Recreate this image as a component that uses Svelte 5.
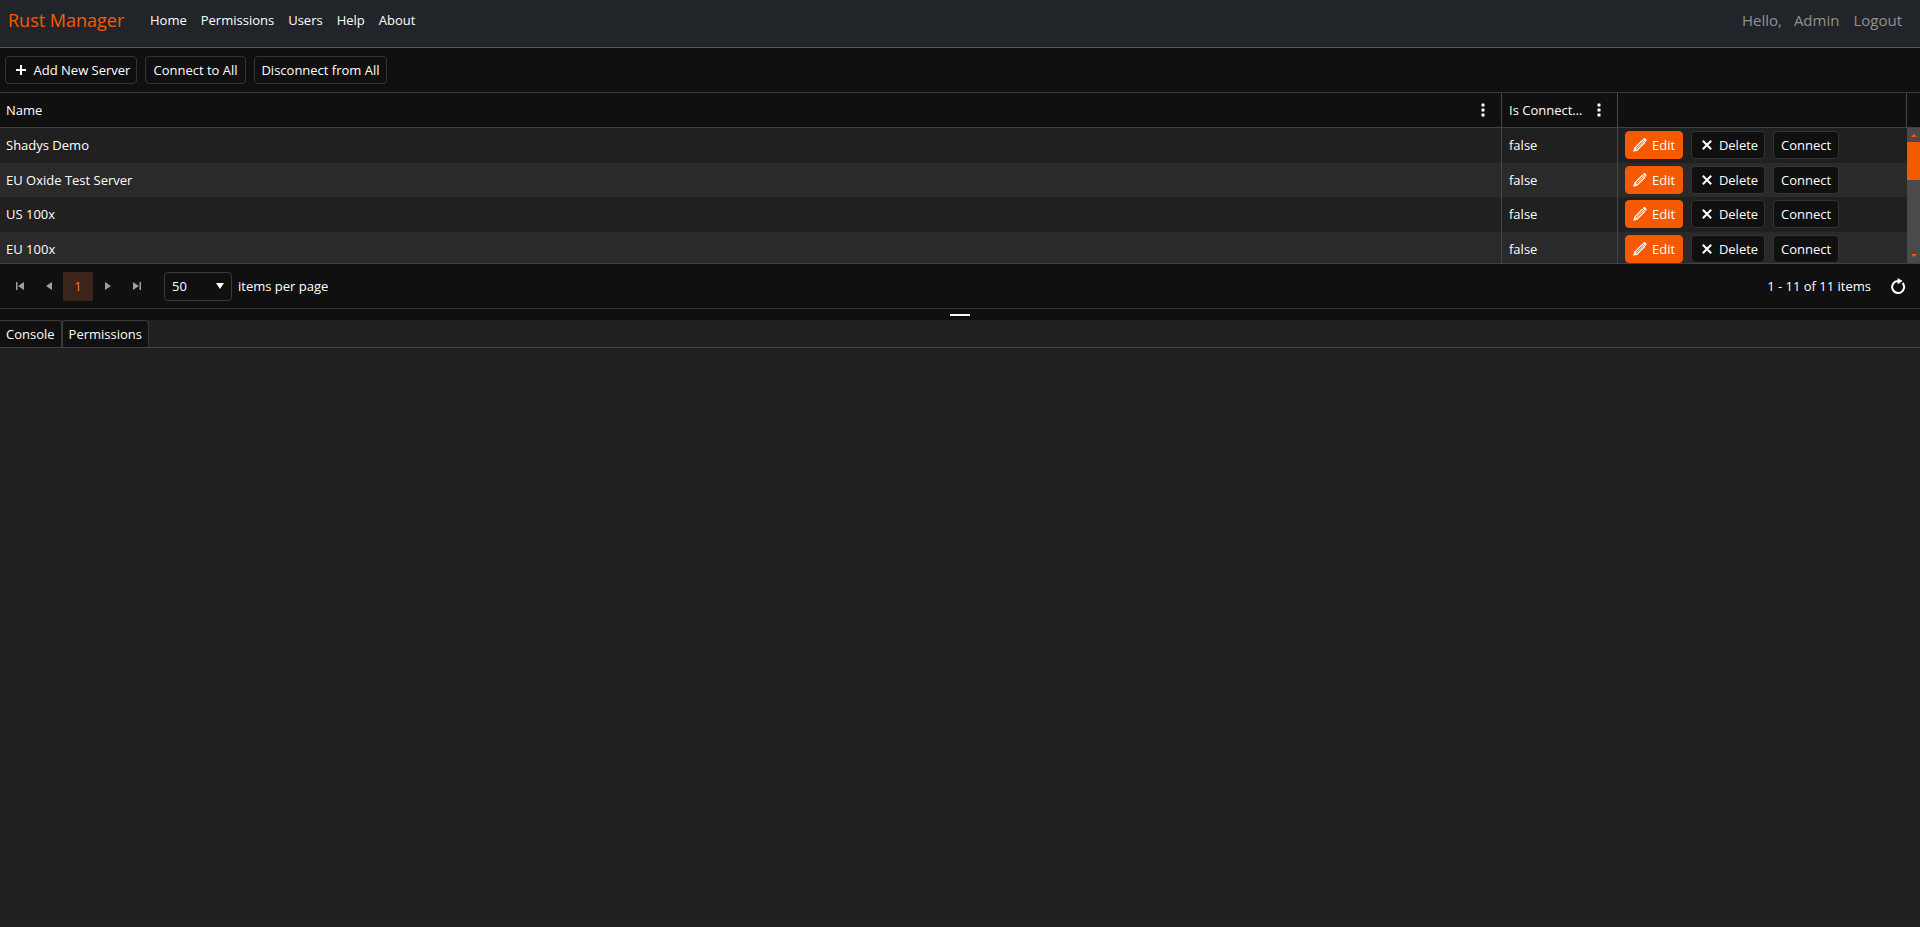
<script>
  const links = ['Home', 'Permissions', 'Users', 'Help', 'About'];
  const servers = ['Shadys Demo', 'EU Oxide Test Server', 'US 100x', 'EU 100x'];
  let pageSize = $state('50');
</script>

{#snippet dots()}
  <button class="menu" aria-label="Column menu">
    <svg width="4" height="14" viewBox="0 0 4 14" fill="currentColor">
      <rect x="0.5" y="0.5" width="3" height="3" rx="0.6" />
      <rect x="0.5" y="5.5" width="3" height="3" rx="0.6" />
      <rect x="0.5" y="10.5" width="3" height="3" rx="0.6" />
    </svg>
  </button>
{/snippet}

<div class="page">
  <header>
    <a class="brand" href="#home">Rust Manager</a>
    <nav>
      {#each links as link}
        <a href="#{link.toLowerCase()}">{link}</a>
      {/each}
    </nav>
    <div class="account">
      <span>Hello,</span>
      <a href="#admin">Admin</a>
      <a class="logout" href="#logout">Logout</a>
    </div>
  </header>

  <div class="toolbar">
    <button class="btn add">
      <svg width="10" height="10" viewBox="0 0 10 10" fill="currentColor"><path d="M4 0h2v4h4v2H6v4H4V6H0V4h4z" /></svg>
      Add New Server
    </button>
    <button class="btn all">Connect to All</button>
    <button class="btn none">Disconnect from All</button>
  </div>

  <section class="grid">
    <table>
      <colgroup><col /><col class="c-state" /><col class="c-actions" /></colgroup>
      <thead>
        <tr>
          <th><div class="head"><span>Name</span>{@render dots()}</div></th>
          <th><div class="head"><span>Is Connected</span>{@render dots()}</div></th>
          <th></th>
        </tr>
      </thead>
      <tbody>
        {#each servers as name}
          <tr>
            <td>{name}</td>
            <td>false</td>
            <td>
              <div class="actions">
                <button class="btn primary">
                  <svg width="14" height="14" viewBox="0 0 14 14">
                    <path fill="currentColor" d="M0.2 13.8l1-4.1L9.3 1.6l3.1 3.1-8.1 8.1z" />
                    <path fill="currentColor" d="M9.8 1.1l.6-.6q1.2-.9 2.4.3t.4 2.4l-.8.9z" />
                    <path d="M2.6 10.1L9.4 3.3l1.3 1.3-6.8 6.8z" fill="#f65a00" />
                    <path d="M3.2 10.8l6.9-6.9" stroke="currentColor" stroke-width="0.7" fill="none" />
                  </svg>
                  Edit
                </button>
                <button class="btn delete">
                  <svg width="10" height="10" viewBox="0 0 10 10" fill="none" stroke="currentColor" stroke-width="2"><path d="M.8.8l8.4 8.4M9.2.8L.8 9.2" /></svg>
                  Delete
                </button>
                <button class="btn connect">Connect</button>
              </div>
            </td>
          </tr>
        {/each}
      </tbody>
    </table>
    <div class="side">
      <div class="corner"></div>
      <div class="scrollbar">
        <svg width="6" height="3" viewBox="0 0 6 3"><path d="M0 3l3-3 3 3z" fill="#f65a00" /></svg>
        <div class="thumb"></div>
        <svg class="down" width="6" height="3" viewBox="0 0 6 3"><path d="M0 0l3 3 3-3z" fill="#f65a00" /></svg>
      </div>
    </div>
  </section>

  <div class="pager">
    <button class="step" aria-label="First page">
      <svg width="8" height="8" viewBox="0 0 8 8" fill="currentColor"><path d="M0 0h1.5v8H0zM8 0v8L2 4z" /></svg>
    </button>
    <button class="step" aria-label="Previous page">
      <svg width="8" height="8" viewBox="0 0 8 8" fill="currentColor"><path d="M7 0v8L1 4z" /></svg>
    </button>
    <button class="step current">1</button>
    <button class="step" aria-label="Next page">
      <svg width="8" height="8" viewBox="0 0 8 8" fill="currentColor"><path d="M1 0v8l6-4z" /></svg>
    </button>
    <button class="step" aria-label="Last page">
      <svg width="8" height="8" viewBox="0 0 8 8" fill="currentColor"><path d="M6.5 0H8v8H6.5zM0 0v8l6-4z" /></svg>
    </button>
    <div class="size">
      <select id="page-size" bind:value={pageSize}>
        <option>50</option>
      </select>
      <svg width="8" height="6" viewBox="0 0 8 6" fill="currentColor"><path d="M0 0h8L4 6z" /></svg>
    </div>
    <label for="page-size">items per page</label>
    <span class="info">1 - 11 of 11 items</span>
    <button class="refresh" aria-label="Refresh">
      <svg width="16" height="16" viewBox="0 0 16 16">
        <path d="M12.6 5A6 6 0 1 1 8 3" fill="none" stroke="currentColor" stroke-width="2" />
        <path d="M7.6 0l5 3-5 3.2z" fill="currentColor" />
      </svg>
    </button>
  </div>

  <div class="splitter"><span></span></div>

  <div class="tabs" role="tablist">
    <button role="tab">Console</button>
    <button role="tab">Permissions</button>
  </div>
</div>

<style>
  :global(body) {
    margin: 0;
    background: #202020;
  }
  .page {
    font: 13px/20px 'Segoe UI', 'Open Sans', 'Noto Sans', sans-serif;
    color: #fff;
  }
  .page * {
    box-sizing: border-box;
  }
  a {
    color: inherit;
    text-decoration: none;
  }
  button {
    font: inherit;
    color: inherit;
    background: none;
    border: 0;
    padding: 0;
    margin: 0;
  }
  svg {
    display: block;
    flex: none;
  }
  header {
    display: flex;
    align-items: center;
    height: 48px;
    padding: 0 18px 8px 8px;
    background: #212529;
    border-bottom: 1px solid #54585a;
  }
  .brand {
    color: #f65a00;
    font-size: 18px;
    width: 142px;
  }
  nav {
    display: flex;
    gap: 14px;
  }
  .account {
    display: flex;
    gap: 12px;
    margin-left: auto;
    color: #909294;
    font-size: 15px;
  }
  .logout {
    margin-left: 2px;
  }
  .btn {
    display: inline-flex;
    align-items: center;
    justify-content: center;
    gap: 8px;
    height: 28px;
    background: #101010;
    border: 1px solid #343434;
    border-radius: 4px;
    white-space: nowrap;
  }
  .toolbar {
    display: flex;
    gap: 8px;
    padding: 8px 5px;
    background: #101010;
    border-bottom: 1px solid #3c3c3c;
  }
  .add {
    width: 132px;
    padding-left: 4px;
  }
  .all {
    width: 101px;
  }
  .none {
    width: 133px;
  }
  .grid {
    display: flex;
    height: 171px;
    overflow: hidden;
    border-bottom: 1px solid #424242;
  }
  table {
    flex: 1;
    table-layout: fixed;
    width: 100%;
    height: 173px;
    border-collapse: separate;
    border-spacing: 0;
  }
  .c-state {
    width: 116px;
  }
  .c-actions {
    width: 289px;
  }
  th,
  td {
    height: 35px;
    padding: 0 6px;
    text-align: left;
    font-weight: 400;
    border-right: 1px solid #464646;
  }
  th {
    background: #101010;
    border-bottom: 1px solid #424242;
  }
  td {
    padding-bottom: 1px;
  }
  tbody tr:nth-child(even) td {
    height: 34px;
  }
  td:last-child {
    border-right: 0;
  }
  th:nth-child(2),
  td:nth-child(2),
  th:last-child,
  td:last-child {
    padding-left: 7px;
  }
  tbody tr:nth-child(even) {
    background: #2a2a2a;
  }
  .head {
    display: flex;
    align-items: center;
    justify-content: space-between;
    padding-right: 10px;
  }
  .head span {
    overflow: hidden;
    text-overflow: ellipsis;
    white-space: nowrap;
  }
  .menu {
    margin-left: 14px;
  }
  .actions {
    display: flex;
    gap: 8px;
  }
  .primary {
    width: 58px;
    gap: 5px;
    background: #f65a00;
    border-color: #f65a00;
  }
  .delete {
    width: 74px;
    gap: 7px;
    padding-left: 4px;
  }
  .connect {
    width: 66px;
  }
  .side {
    display: flex;
    flex-direction: column;
    width: 13px;
  }
  .corner {
    height: 35px;
    flex: none;
    background: #101010;
    border-bottom: 1px solid #424242;
  }
  .scrollbar {
    display: flex;
    flex-direction: column;
    align-items: center;
    flex: 1;
    padding: 6px 0;
    background: #4a4a4a;
  }
  .thumb {
    width: 13px;
    height: 38px;
    margin-top: 5px;
    background: #f65a00;
  }
  .down {
    margin-top: auto;
  }
  .pager {
    display: flex;
    align-items: center;
    height: 45px;
    padding: 0 14px 0 5px;
    background: #101010;
    border-bottom: 1px solid #303030;
  }
  .step {
    display: flex;
    align-items: center;
    justify-content: center;
    width: 29px;
    height: 29px;
    color: #a0a0a0;
  }
  .current {
    width: 30px;
    background: #3d241a;
    color: #f97b38;
  }
  .size {
    display: grid;
    align-items: center;
    margin: 0 6px 0 13px;
  }
  .size > * {
    grid-area: 1 / 1;
  }
  .size svg {
    justify-self: end;
    margin-right: 8px;
    pointer-events: none;
  }
  select {
    appearance: none;
    width: 68px;
    height: 29px;
    padding: 0 7px;
    font: inherit;
    color: inherit;
    background: #101010;
    border: 1px solid #3a3a3a;
    border-radius: 4px;
  }
  .info {
    margin-left: auto;
  }
  .refresh {
    margin-left: 19px;
  }
  .splitter {
    display: flex;
    align-items: center;
    justify-content: center;
    height: 11px;
    background: #101010;
  }
  .splitter span {
    width: 20px;
    height: 2px;
    background: #fff;
  }
  .tabs {
    display: flex;
    border-bottom: 1px solid #424242;
  }
  .tabs button {
    height: 27px;
    padding: 0 6px;
    background: #101010;
    border: 1px solid #3a3a3a;
    border-bottom: 0;
    border-radius: 4px 4px 0 0;
  }
  .tabs button:first-child {
    border-left: 0;
    border-top-left-radius: 0;
  }
</style>
